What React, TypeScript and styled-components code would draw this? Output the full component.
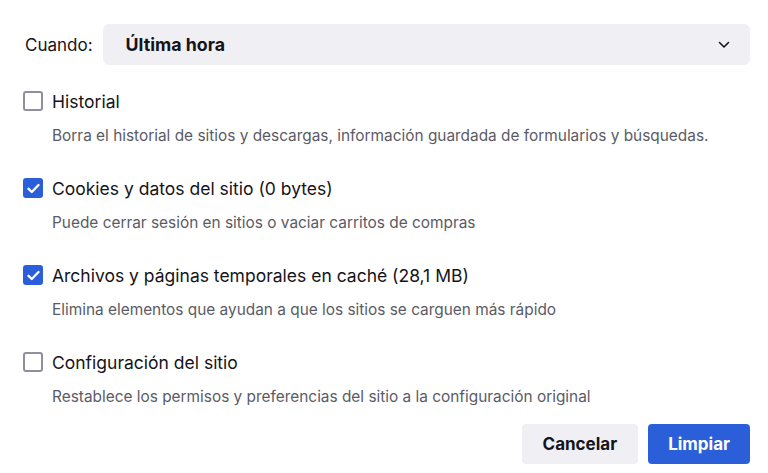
import React from "react";
import styled, { createGlobalStyle } from "styled-components";

const Global = createGlobalStyle`
  html, body { margin: 0; padding: 0; background: #fff; }
  body { font-family: Inter, "Noto Sans", sans-serif; color: #15141a; }
`;

const Dialog = styled.div`
  width: 768px;
  height: 473px;
  box-sizing: border-box;
  padding: 24px 18px 0 23px;
  display: flex;
  flex-direction: column;
`;

const WhenRow = styled.div`
  display: flex;
  align-items: center;
  gap: 10px;
  height: 41px;
`;

const WhenLabel = styled.span`
  font-size: 17px;
  padding-left: 2px;
`;

const Select = styled.div`
  flex: 1;
  height: 41px;
  background: #f0f0f4;
  border-radius: 6px;
  display: flex;
  align-items: center;
  justify-content: space-between;
  padding: 0 20px 0 23px;
  box-sizing: border-box;
  font-size: 17.8px;
  font-weight: 700;
`;

const Options = styled.div`
  display: flex;
  flex-direction: column;
  gap: 29px;
  margin-top: 24px;
`;

const Option = styled.div`
  display: flex;
  flex-direction: column;
  gap: 12px;
`;

const OptionHead = styled.div`
  display: flex;
  align-items: center;
  gap: 9px;
  height: 24px;
`;

const Box = styled.span<{ $checked: boolean }>`
  width: 20px;
  height: 20px;
  box-sizing: border-box;
  border-radius: 3px;
  border: ${(p) => (p.$checked ? "none" : "2px solid #8f8f9d")};
  background: ${(p) => (p.$checked ? "#2b5fd9" : "#fff")};
  display: flex;
  align-items: center;
  justify-content: center;
`;

const OptionLabel = styled.span`
  font-size: 17.5px;
`;

const OptionDesc = styled.div`
  font-size: 15.4px;
  color: #5b5b66;
  padding-left: 29px;
  line-height: 22px;
`;

const Footer = styled.div`
  display: flex;
  justify-content: flex-end;
  gap: 10px;
  margin-top: 16px;
`;

const Button = styled.button<{ $primary?: boolean }>`
  height: 40px;
  border: none;
  border-radius: 4px;
  font-family: inherit;
  font-size: 17px;
  font-weight: 700;
  padding: 0 ${(p) => (p.$primary ? "20px" : "21px")};
  background: ${(p) => (p.$primary ? "#2b5fd9" : "#f0f0f4")};
  color: ${(p) => (p.$primary ? "#fff" : "#15141a")};
`;

const Check = () => (
  <svg width="13" height="11" viewBox="0 0 13 11">
    <path d="M1.5 5.8 L4.8 9 L11.5 2" stroke="#fff" strokeWidth="2.3" fill="none" strokeLinecap="round" strokeLinejoin="round" />
  </svg>
);

const Chevron = () => (
  <svg width="12" height="8" viewBox="0 0 12 8">
    <path d="M1.5 1.5 L6 6 L10.5 1.5" stroke="#15141a" strokeWidth="1.6" fill="none" strokeLinecap="round" strokeLinejoin="round" />
  </svg>
);

const items = [
  { label: "Historial", desc: "Borra el historial de sitios y descargas, información guardada de formularios y búsquedas.", checked: false },
  { label: "Cookies y datos del sitio (0 bytes)", desc: "Puede cerrar sesión en sitios o vaciar carritos de compras", checked: true },
  { label: "Archivos y páginas temporales en caché (28,1 MB)", desc: "Elimina elementos que ayudan a que los sitios se carguen más rápido", checked: true },
  { label: "Configuración del sitio", desc: "Restablece los permisos y preferencias del sitio a la configuración original", checked: false },
];

export default function App() {
  return (
    <>
      <Global />
      <Dialog>
        <WhenRow>
          <WhenLabel>Cuando:</WhenLabel>
          <Select>
            <span>Última hora</span>
            <Chevron />
          </Select>
        </WhenRow>
        <Options>
          {items.map((it) => (
            <Option key={it.label}>
              <OptionHead>
                <Box $checked={it.checked}>{it.checked && <Check />}</Box>
                <OptionLabel>{it.label}</OptionLabel>
              </OptionHead>
              <OptionDesc>{it.desc}</OptionDesc>
            </Option>
          ))}
        </Options>
        <Footer>
          <Button>Cancelar</Button>
          <Button $primary>Limpiar</Button>
        </Footer>
      </Dialog>
    </>
  );
}
